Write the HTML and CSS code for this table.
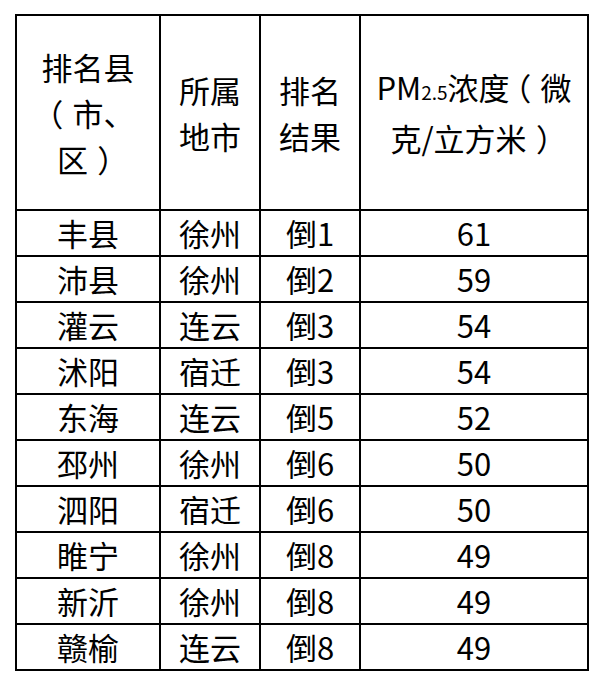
FILE: index.html
```html
<!DOCTYPE html>
<html lang="zh-CN">
<head>
<meta charset="utf-8">
<title>PM2.5排名</title>
<link rel="stylesheet" href="styles.css">
</head>
<body>
<table class="rank">
  <colgroup>
    <col class="c1"><col class="c2"><col class="c3"><col class="c4">
  </colgroup>
  <thead>
    <tr class="head">
      <th>排名县<br><span class="open">（</span>市、<br>区<span class="close">）</span></th>
      <th>所属<br>地市</th>
      <th>排名<br>结果</th>
      <th>PM<span class="sub">2.5</span>浓度<span class="open">（</span>微<br>克/立方米<span class="close">）</span></th>
    </tr>
  </thead>
  <tbody>
    <tr><td>丰县</td><td>徐州</td><td>倒1</td><td>61</td></tr>
    <tr><td>沛县</td><td>徐州</td><td>倒2</td><td>59</td></tr>
    <tr><td>灌云</td><td>连云</td><td>倒3</td><td>54</td></tr>
    <tr><td>沭阳</td><td>宿迁</td><td>倒3</td><td>54</td></tr>
    <tr><td>东海</td><td>连云</td><td>倒5</td><td>52</td></tr>
    <tr><td>邳州</td><td>徐州</td><td>倒6</td><td>50</td></tr>
    <tr><td>泗阳</td><td>宿迁</td><td>倒6</td><td>50</td></tr>
    <tr><td>睢宁</td><td>徐州</td><td>倒8</td><td>49</td></tr>
    <tr><td>新沂</td><td>徐州</td><td>倒8</td><td>49</td></tr>
    <tr><td>赣榆</td><td>连云</td><td>倒8</td><td>49</td></tr>
  </tbody>
</table>
</body>
</html>
```
FILE: styles.css
```css
html, body {
  margin: 0;
  background: #ffffff;
}
body {
  padding: 14px 0 0 15px;
  font-family: "Noto Sans CJK SC", "Noto Sans", sans-serif;
  color: #000000;
}
.rank {
  border-collapse: collapse;
  table-layout: fixed;
  width: 572px;
}
.c1 { width: 144px; }
.c2 { width: 100px; }
.c3 { width: 100px; }
.c4 { width: 228px; }
.rank th,
.rank td {
  border: 2px solid #000000;
  padding: 0;
  text-align: center;
  vertical-align: middle;
  font-size: 31px;
  font-weight: normal;
}
.rank th {
  height: 193px;
  line-height: 46px;
}
.rank td {
  height: 44px;
  line-height: 44px;
}
.sub {
  font-size: 19px;
}
.open {
  font-feature-settings: "halt" 1;
  padding-left: 0.2em;
  padding-right: 0.3em;
}
.close {
  font-feature-settings: "halt" 1;
  padding-left: 0.3em;
  padding-right: 0.2em;
}
```
